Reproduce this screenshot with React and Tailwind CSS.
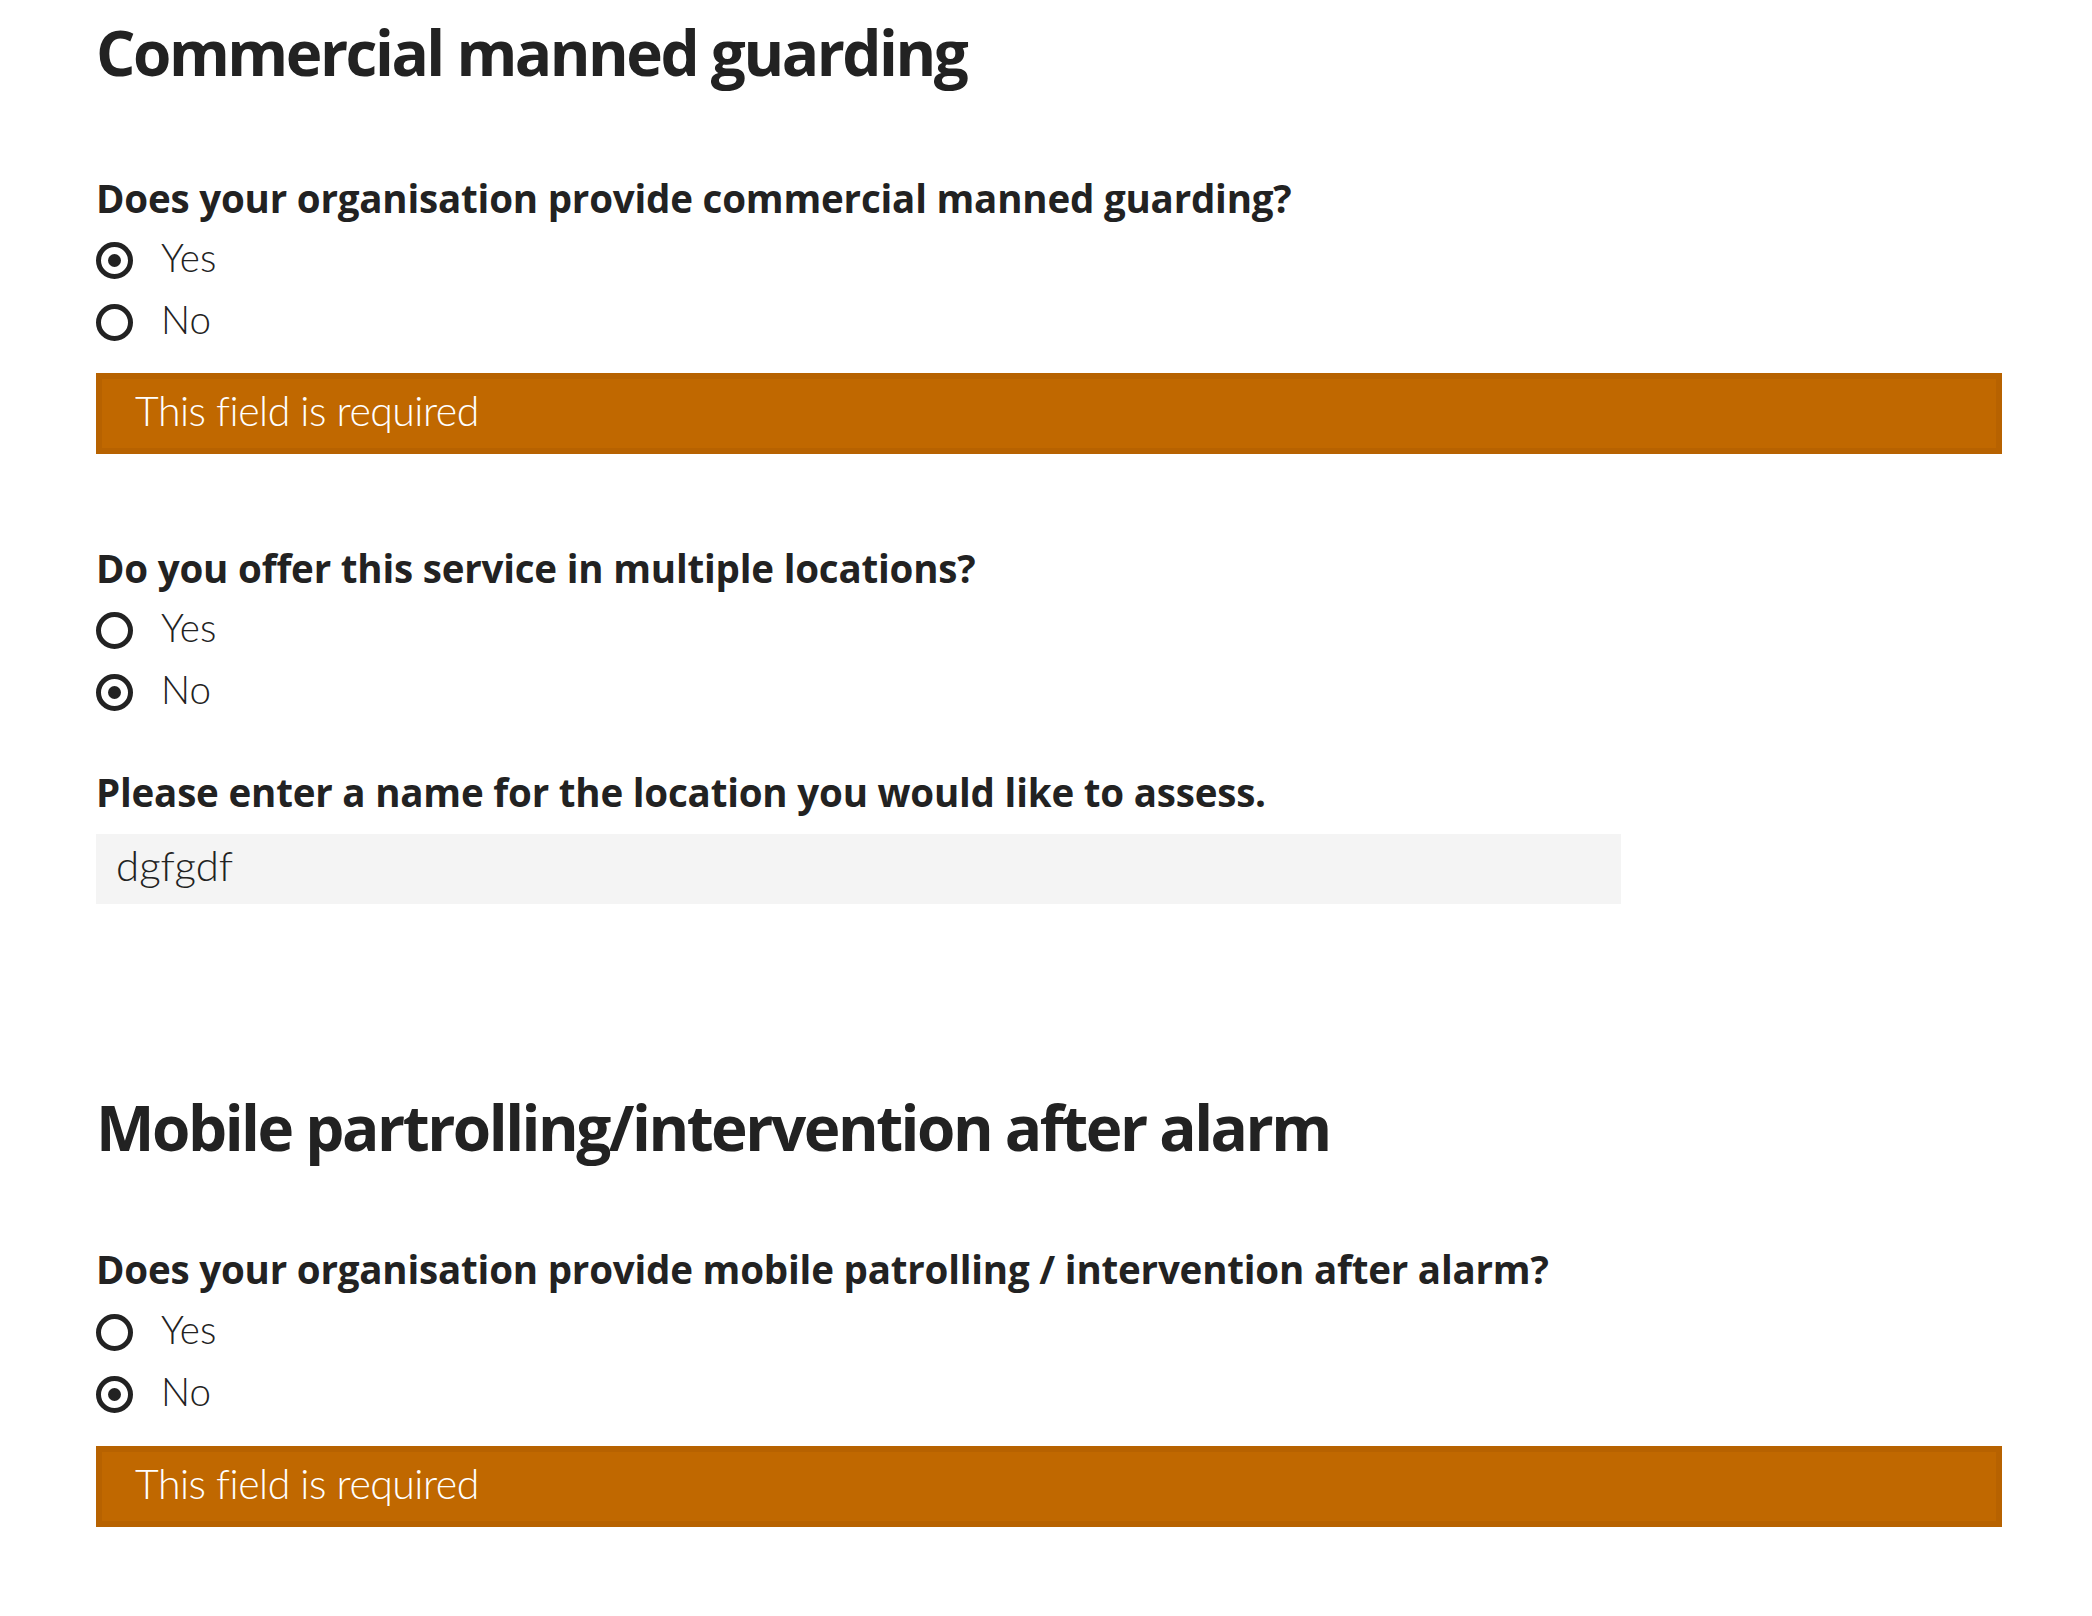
import React from 'react';

const Radio = ({ label, checked }) => (
  <div className="flex h-[62px] items-center">
    <span className="flex h-[37px] w-[37px] shrink-0 items-center justify-center rounded-full border-[5px] border-[#222222]">
      {checked && <span className="h-[13px] w-[13px] rounded-full bg-[#222222]" />}
    </span>
    <span className="ml-[28px] pb-[6px] font-['Lato',sans-serif] text-[38.5px] font-light leading-[56px] text-[#222222]">
      {label}
    </span>
  </div>
);

const Question = ({ children, className = '' }) => (
  <div
    className={`font-['Open_Sans',sans-serif] text-[38.5px] font-bold leading-[48px] tracking-[-0.005em] text-[#222222] ${className}`}
  >
    {children}
  </div>
);

const Heading = ({ children, className = '' }) => (
  <h2
    className={`font-['Open_Sans',sans-serif] text-[62px] font-bold leading-[80px] tracking-[-0.04em] text-[#222222] ${className}`}
  >
    {children}
  </h2>
);

const FieldError = ({ className = '' }) => (
  <div
    className={`flex h-[81px] items-center border-[6px] border-[#b76200] bg-[#c06800] pl-[33px] ${className}`}
  >
    <span className="pb-[5px] font-['Lato',sans-serif] text-[41px] font-light leading-[56px] tracking-[-0.5px] text-white">
      This field is required
    </span>
  </div>
);

export default function App() {
  return (
    <div className="min-h-[1616px] bg-white pl-[96px] pr-[90px] pt-[12px]">
      <section>
        <Heading>Commercial manned guarding</Heading>

        <Question className="mt-[82px]">Does your organisation provide commercial manned guarding?</Question>
        <div className="mt-[7px]">
          <Radio label="Yes" checked />
          <Radio label="No" />
        </div>
        <FieldError className="mt-[20px]" />

        <Question className="mt-[90px]">Do you offer this service in multiple locations?</Question>
        <div className="mt-[7px]">
          <Radio label="Yes" />
          <Radio label="No" checked />
        </div>

        <Question className="mt-[45px]">Please enter a name for the location you would like to assess.</Question>
        <div className="mt-[18px] h-[70px] w-[1525px] bg-[#f4f4f4] pl-[20px] pt-[6px] font-['Lato',sans-serif] text-[42px] font-light leading-[50px] text-[#222222]">
          dgfgdf
        </div>
      </section>

      <section>
        <Heading className="mt-[183px]">Mobile partrolling/intervention after alarm</Heading>

        <Question className="mt-[78px]">
          Does your organisation provide mobile patrolling / intervention after alarm?
        </Question>
        <div className="mt-[8px]">
          <Radio label="Yes" />
          <Radio label="No" checked />
        </div>
        <FieldError className="mt-[21px]" />
      </section>
    </div>
  );
}
